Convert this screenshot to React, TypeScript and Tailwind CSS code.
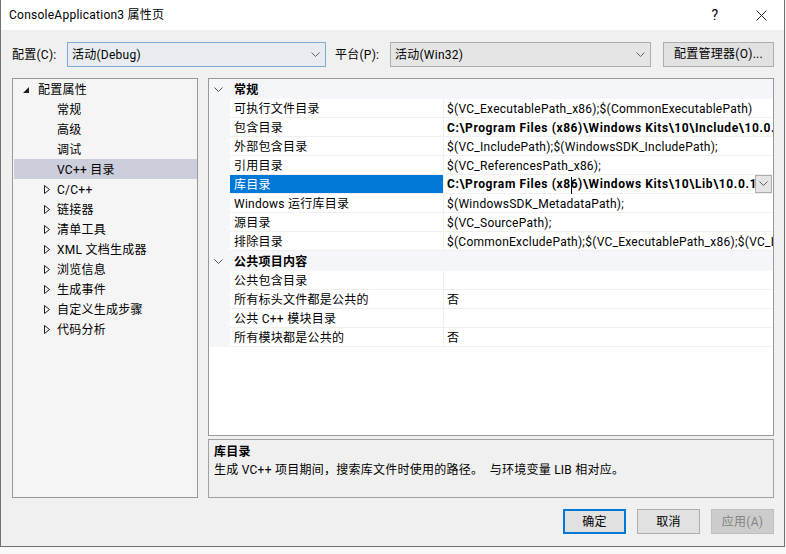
import React from 'react';

type Prop = { name: string; value: string; bold?: boolean; selected?: boolean };

const GENERAL: Prop[] = [
  { name: '可执行文件目录', value: '$(VC_ExecutablePath_x86);$(CommonExecutablePath)' },
  { name: '包含目录', value: 'C:\\Program Files (x86)\\Windows Kits\\10\\Include\\10.0.17763.0\\ucrt;$(IncludePath)', bold: true },
  { name: '外部包含目录', value: '$(VC_IncludePath);$(WindowsSDK_IncludePath);' },
  { name: '引用目录', value: '$(VC_ReferencesPath_x86);' },
  { name: '库目录', value: 'C:\\Program Files (x86)\\Windows Kits\\10\\Lib\\10.0.17763.0\\ucrt\\x86', bold: true, selected: true },
  { name: 'Windows 运行库目录', value: '$(WindowsSDK_MetadataPath);' },
  { name: '源目录', value: '$(VC_SourcePath);' },
  { name: '排除目录', value: '$(CommonExcludePath);$(VC_ExecutablePath_x86);$(VC_LibraryPath_x86)' },
];

const PUBLIC: Prop[] = [
  { name: '公共包含目录', value: '' },
  { name: '所有标头文件都是公共的', value: '否' },
  { name: '公共 C++ 模块目录', value: '' },
  { name: '所有模块都是公共的', value: '否' },
];

const TREE = [
  { label: '常规', leaf: true },
  { label: '高级', leaf: true },
  { label: '调试', leaf: true },
  { label: 'VC++ 目录', leaf: true, active: true },
  { label: 'C/C++' },
  { label: '链接器' },
  { label: '清单工具' },
  { label: 'XML 文档生成器' },
  { label: '浏览信息' },
  { label: '生成事件' },
  { label: '自定义生成步骤' },
  { label: '代码分析' },
];

const Chevron = ({ className = '' }: { className?: string }) => (
  <svg width="9" height="6" viewBox="0 0 9 6" className={className}>
    <polyline points="0.5,0.5 4.5,4.5 8.5,0.5" fill="none" stroke="currentColor" strokeWidth="1" />
  </svg>
);

const Combo = ({ text, focused, width }: { text: string; focused?: boolean; width: string }) => (
  <div
    className={`${width} h-[25px] flex items-center justify-between pl-[4px] pr-[5px] border ${
      focused ? 'border-[#7eaad8] bg-[#e8ecf1]' : 'border-[#adadad] bg-[#e5e5e5]'
    }`}
  >
    <span>{text}</span>
    <Chevron className="text-[#606060]" />
  </div>
);

const CategoryRow = ({ title }: { title: string }) => (
  <div className="h-[20px] flex items-center pt-px bg-[#f4f6fa]">
    <div className="w-[21px] flex justify-center">
      <Chevron className="text-[#505050] ml-[-2px]" />
    </div>
    <span className="pl-[4px] font-bold">{title}</span>
  </div>
);

const PropRow = ({ p }: { p: Prop }) => (
  <div className="h-[19px] flex">
    <div className="w-[21px] bg-[#f4f6fa] shrink-0" />
    <div
      className={`w-[214px] shrink-0 flex items-center pl-[4px] pt-px border-r border-b border-[#f0f0f0] ${
        p.selected ? 'bg-[#0078d7] text-white' : 'bg-white'
      }`}
    >
      {p.name}
    </div>
    <div className="flex-1 min-w-0 flex items-center pt-px border-b border-[#f0f0f0] bg-white">
      <span
        className={`flex-1 min-w-0 pl-[3px] whitespace-nowrap overflow-hidden ${
          p.bold ? 'font-bold tracking-[0.6px]' : ''
        }`}
      >
        {p.selected ? (
          <>
            C:\Program Files (x8
            <span className="inline-block w-px h-[17px] bg-black align-middle -mr-px" />
            6)\Windows Kits\10\Lib\10.0.17763.0\ucrt\x86
          </>
        ) : (
          p.value
        )}
      </span>
      {p.selected && (
        <div className="w-[17px] h-[18px] mr-[1px] -mt-px flex items-center justify-center border border-[#adadad] bg-[#e5e5e5]">
          <Chevron className="text-[#606060]" />
        </div>
      )}
    </div>
  </div>
);

const TreeArrow = ({ open }: { open?: boolean }) =>
  open ? (
    <svg width="6" height="6" viewBox="0 0 6 6">
      <polygon points="6,0 6,6 0,6" fill="#1e1e1e" />
    </svg>
  ) : (
    <svg width="6" height="9" viewBox="0 0 6 9">
      <polygon points="0.5,0.5 5.5,4.5 0.5,8.5" fill="none" stroke="#1e1e1e" strokeWidth="1" />
    </svg>
  );

export default function App() {
  return (
    <div className="w-[786px] h-[554px] bg-[#f8f8f8] overflow-hidden text-[12px] tracking-[0.25px] text-black font-['Roboto','Noto_Sans_CJK_SC',sans-serif]">
      <div className="w-[785px] h-[547px] border-l border-r border-b border-[#707070] bg-[#f0f0f0] flex flex-col">
        {/* title bar */}
        <div className="h-[30px] shrink-0 bg-white flex items-center pl-[8px]">
          <span className="flex-1">ConsoleApplication3 属性页</span>
          <span className="w-[46px] text-center text-[14px]">?</span>
          <div className="w-[46px] flex justify-center">
            <svg width="11" height="11" viewBox="0 0 11 11">
              <path d="M0.5 0.5 L10.5 10.5 M10.5 0.5 L0.5 10.5" stroke="#222" strokeWidth="1" />
            </svg>
          </div>
        </div>

        {/* configuration / platform */}
        <div className="flex items-center mt-[12px] pl-[11px] h-[25px]">
          <span className="w-[55px]">配置(C):</span>
          <Combo text="活动(Debug)" focused width="w-[259px]" />
          <span className="ml-[9px] w-[55px]">平台(P):</span>
          <Combo text="活动(Win32)" width="w-[261px]" />
          <button className="ml-[12px] w-[111px] h-[25px] -mt-px border border-[#adadad] bg-[#e1e1e1]">配置管理器(O)...</button>
        </div>

        {/* tree + property grid */}
        <div className="flex mt-[11px] pl-[11px] h-[420px]">
          <div className="w-[186px] h-full border border-[#999] bg-[#f5f5f5] pl-px">
            <div className="h-[20px] flex items-center pt-px">
              <div className="w-[9px]" />
              <TreeArrow open />
              <span className="ml-[9px]">配置属性</span>
            </div>
            {TREE.map((t) => (
              <div key={t.label} className={`h-[20px] flex items-center pt-px ${t.active ? 'bg-[#cccedb]' : ''}`}>
                <div className="w-[30px]" />
                <div className="w-[13px] flex">{!t.leaf && <TreeArrow />}</div>
                <span>{t.label}</span>
              </div>
            ))}
          </div>

          <div className="ml-[10px] w-[566px] flex flex-col">
            <div className="h-[358px] border border-[#999] bg-white overflow-hidden">
              <CategoryRow title="常规" />
              {GENERAL.map((p) => (
                <PropRow key={p.name} p={p} />
              ))}
              <CategoryRow title="公共项目内容" />
              {PUBLIC.map((p) => (
                <PropRow key={p.name} p={p} />
              ))}
            </div>
            <div className="mt-[3px] h-[59px] border border-[#a0a0a0] bg-[#f0f0f0] pl-[5px] pt-[3px] leading-[18px]">
              <div className="font-bold">库目录</div>
              <div>生成 VC++ 项目期间，搜索库文件时使用的路径。&nbsp;&nbsp;与环境变量 LIB 相对应。</div>
            </div>
          </div>
        </div>

        {/* dialog buttons */}
        <div className="flex justify-end gap-[11px] mt-[11px] pr-[10px]">
          <button className="w-[63px] h-[25px] border-2 border-[#0078d7] bg-[#e1e1e1]">确定</button>
          <button className="w-[63px] h-[25px] border border-[#adadad] bg-[#e1e1e1]">取消</button>
          <button className="w-[63px] h-[25px] border border-[#bfbfbf] bg-[#cccccc] text-[#838383]">应用(A)</button>
        </div>
      </div>
    </div>
  );
}
